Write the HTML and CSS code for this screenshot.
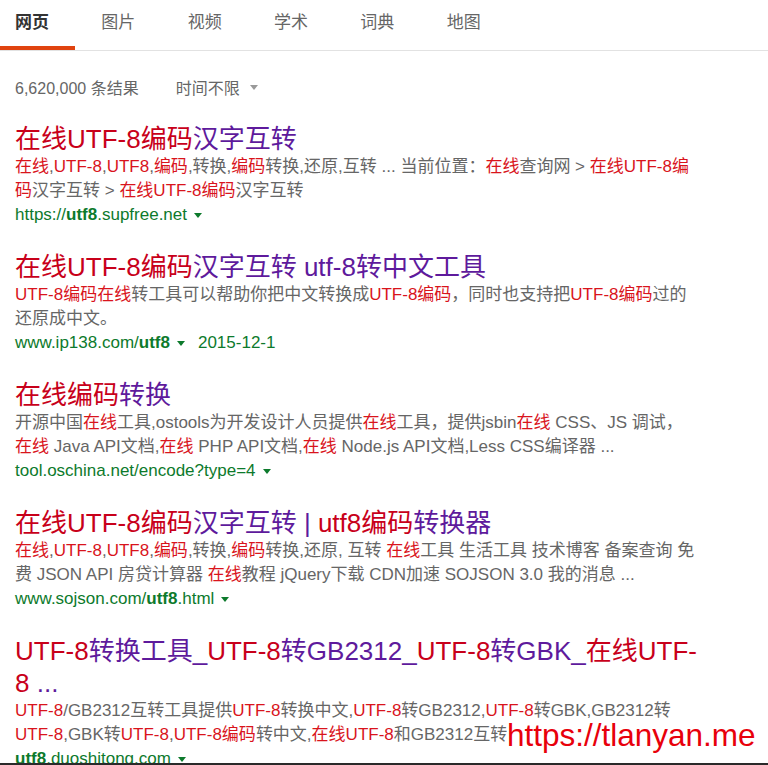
FILE: index.html
```html
<!DOCTYPE html>
<html lang="zh-CN">
<head>
<meta charset="utf-8">
<title>在线 utf-8 编码 - 搜索</title>
<link rel="stylesheet" href="styles.css">
</head>
<body>
<div class="page">
  <nav class="tabs">
    <a class="tab active">网页</a>
    <a class="tab">图片</a>
    <a class="tab">视频</a>
    <a class="tab">学术</a>
    <a class="tab">词典</a>
    <a class="tab">地图</a>
  </nav>
  <div class="meta">
    <span class="count">6,620,000 条结果</span>
    <span class="filter">时间不限<i class="caret"></i></span>
  </div>
  <ol class="results">
    <li class="result">
      <h2 class="title"><em>在线UTF-8编码</em>汉字互转</h2>
      <p class="snippet"><em>在线</em>,<em>UTF-8</em>,<em>UTF8</em>,<em>编码</em>,转换,<em>编码</em>转换,还原,互转 ... 当前位置：<em>在线</em>查询网 &gt; <em>在线UTF-8编</em><br><em>码</em>汉字互转 &gt; <em>在线UTF-8编码</em>汉字互转</p>
      <div class="url">https://<b>utf8</b>.supfree.net<i class="caret"></i></div>
    </li>
    <li class="result">
      <h2 class="title"><em>在线UTF-8编码</em>汉字互转 utf-8转中文工具</h2>
      <p class="snippet"><em>UTF-8编码在线</em>转工具可以帮助你把中文转换成<em>UTF-8编码</em>，同时也支持把<em>UTF-8编码</em>过的<br>还原成中文。</p>
      <div class="url">www.ip138.com/<b>utf8</b><i class="caret"></i><span class="date">2015-12-1</span></div>
    </li>
    <li class="result">
      <h2 class="title"><em>在线编码</em>转换</h2>
      <p class="snippet">开源中国<em>在线</em>工具,ostools为开发设计人员提供<em>在线</em>工具，提供jsbin<em>在线</em> CSS、JS 调试，<br><em>在线</em> Java API文档,<em>在线</em> PHP API文档,<em>在线</em> Node.js API文档,Less CSS编译器 ...</p>
      <div class="url">tool.oschina.net/encode?type=4<i class="caret"></i></div>
    </li>
    <li class="result">
      <h2 class="title"><em>在线UTF-8编码</em>汉字互转 | <em>utf8编码</em>转换器</h2>
      <p class="snippet"><em>在线</em>,<em>UTF-8</em>,<em>UTF8</em>,<em>编码</em>,转换,<em>编码</em>转换,还原, 互转 <em>在线</em>工具 生活工具 技术博客 备案查询 免<br>费 JSON API 房贷计算器 <em>在线</em>教程 jQuery下载 CDN加速 SOJSON 3.0 我的消息 ...</p>
      <div class="url">www.sojson.com/<b>utf8</b>.html<i class="caret"></i></div>
    </li>
    <li class="result">
      <h2 class="title"><em>UTF-8</em>转换工具_<em>UTF-8</em>转GB2312_<em>UTF-8</em>转GBK_<em>在线UTF-</em><br><em>8</em> ...</h2>
      <p class="snippet"><em>UTF-8</em>/GB2312互转工具提供<em>UTF-8</em>转换中文,<em>UTF-8</em>转GB2312,<em>UTF-8</em>转GBK,GB2312转<br><em>UTF-8</em>,GBK转<em>UTF-8</em>,<em>UTF-8编码</em>转中文,<em>在线UTF-8</em>和GB2312互转</p>
      <div class="url"><b>utf8</b>.duoshitong.com<i class="caret"></i></div>
    </li>
  </ol>
  <div class="watermark">https://tlanyan.me</div>
</div>
</body>
</html>
```
FILE: styles.css
```css
html, body {
  margin: 0;
  padding: 0;
  background: #fff;
}

body {
  font-family: "Liberation Sans", "Noto Sans CJK SC", sans-serif;
}

.page {
  position: relative;
  height: 763px;
  overflow: hidden;
  border-bottom: 2px solid #2a2a2a;
}

/* tabs */
.tabs {
  display: flex;
  height: 50px;
  border-bottom: 1px solid #e2e2e2;
}

.tab {
  position: relative;
  width: 86.33px;
  box-sizing: border-box;
  padding-left: 15px;
  font-size: 17px;
  line-height: 46px;
  color: #666;
  text-decoration: none;
}

.tab.active {
  font-weight: bold;
  color: #333;
}

.tab.active::after {
  content: "";
  position: absolute;
  left: 0;
  bottom: 0;
  width: 75px;
  height: 4px;
  background: #e0430f;
}

/* meta row */
.meta {
  display: flex;
  align-items: center;
  margin-top: 24px;
  padding-left: 15px;
  height: 24px;
  font-size: 16px;
  color: #666;
}

.filter {
  display: flex;
  align-items: center;
  margin-left: 37px;
}

.filter .caret {
  margin-left: 10px;
  border-top-color: #999;
}

.caret {
  display: inline-block;
  width: 0;
  height: 0;
  border-left: 4px solid transparent;
  border-right: 4px solid transparent;
  border-top: 5px solid currentColor;
  margin-left: 7px;
}

/* results */
.results {
  list-style: none;
  margin: 24px 0 0;
  padding: 0 0 0 15px;
}

.result + .result {
  margin-top: 24px;
}

.title {
  margin: 0;
  font-size: 26px;
  font-weight: normal;
  line-height: 32px;
  color: #5e1a9c;
  white-space: nowrap;
}

.title em {
  font-style: normal;
  color: #c8001a;
}

.snippet {
  margin: 0;
  font-size: 17px;
  line-height: 24px;
  color: #666;
  white-space: nowrap;
}

.snippet em {
  font-style: normal;
  color: #d9141c;
}

.url {
  display: flex;
  align-items: center;
  font-size: 17px;
  line-height: 24px;
  color: #0d7a2c;
  white-space: pre;
}

.url b {
  font-weight: bold;
}

.date {
  margin-left: 13px;
}

.watermark {
  position: absolute;
  left: 507px;
  top: 720px;
  font-size: 31.5px;
  line-height: 31px;
  color: #e8000b;
  font-family: "Liberation Sans", sans-serif;
}
```
